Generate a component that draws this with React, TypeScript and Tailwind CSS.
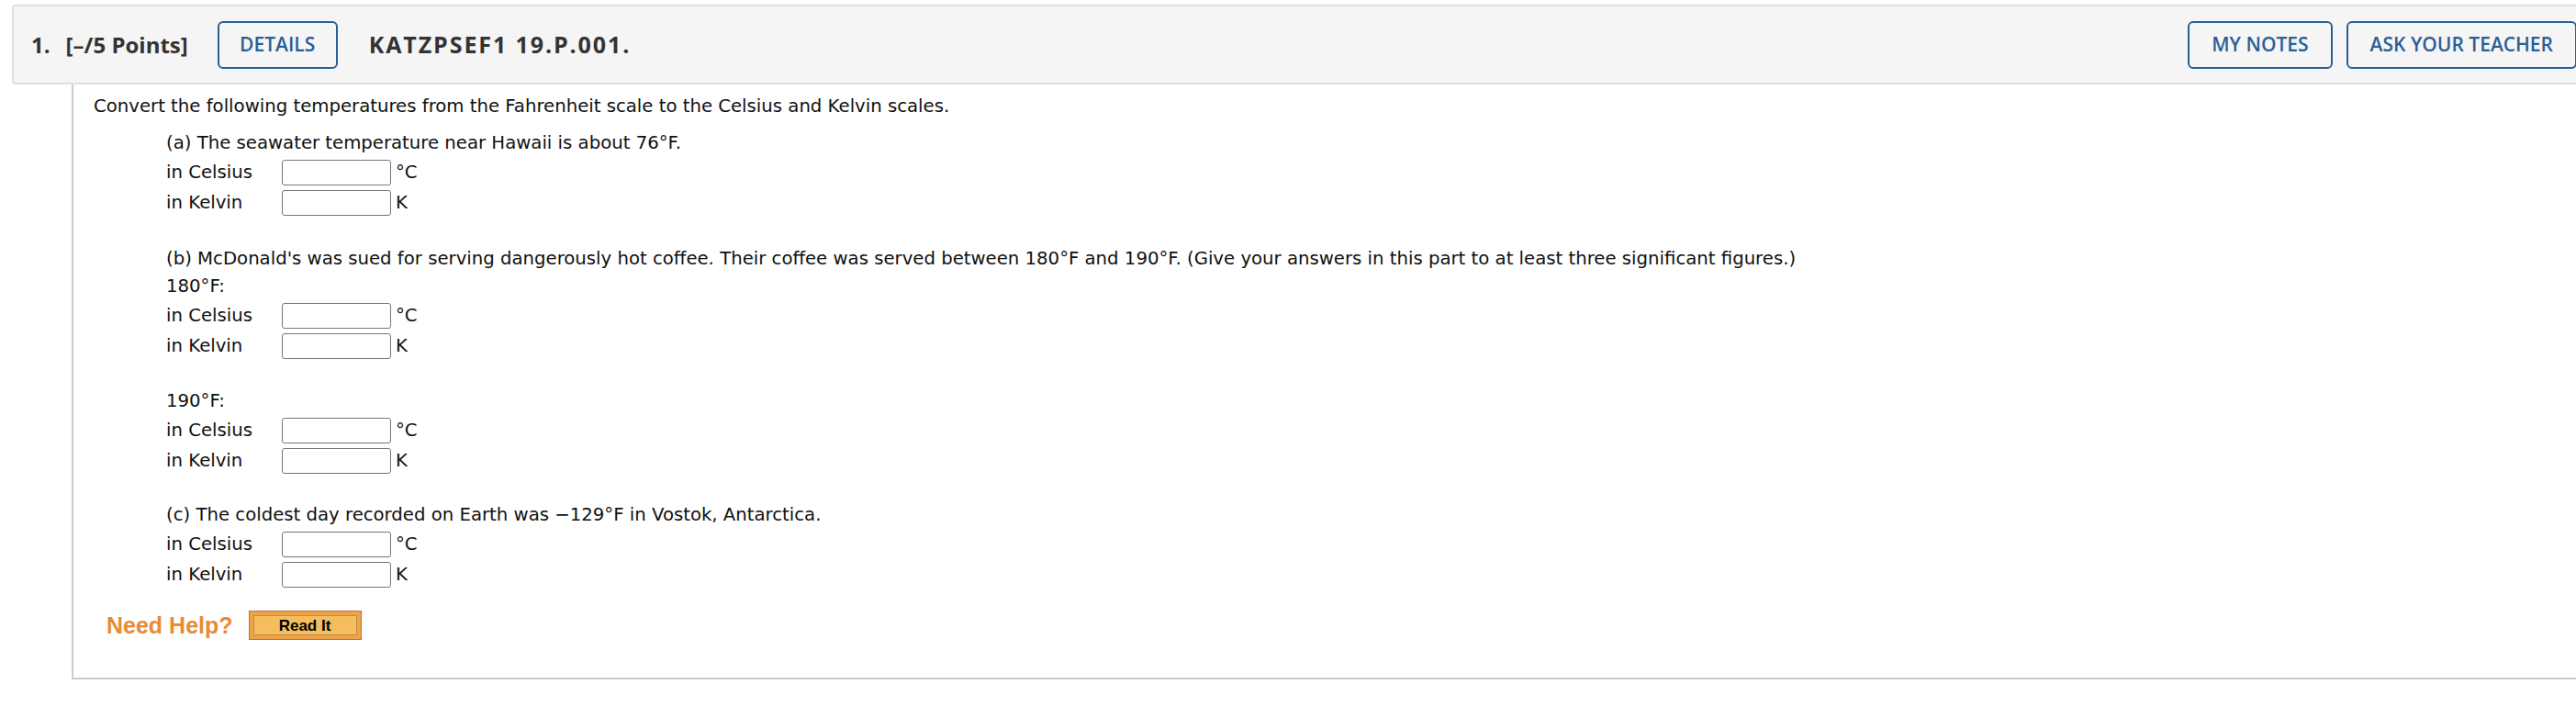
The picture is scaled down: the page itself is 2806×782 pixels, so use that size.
import React from "react"

function AnswerRow({ label, unit }: { label: string; unit: string }) {
  return (
    <div className="flex items-center h-[33px]">
      <span className="w-[126px]">{label}</span>
      <input
        type="text"
        className="w-[119px] h-[28px] border border-[#767676] rounded-[3px] bg-white outline-none"
      />
      <span className="ml-[5px]">{unit}</span>
    </div>
  )
}

function HeaderButton({ children }: { children: React.ReactNode }) {
  return (
    <button className="h-[52px] px-[24px] border-2 border-[#2a5f96] rounded-[6px] bg-transparent text-[#2a5f96] text-[21px] font-semibold leading-none">
      {children}
    </button>
  )
}

export default function App() {
  return (
    <div className="w-[2806px] min-h-[782px] overflow-hidden bg-white">
      <div className="pt-[5px] pl-[13px]">
        <div className="flex items-center h-[87px] bg-[#f5f5f5] border-2 border-r-0 border-[#dfdfdf] rounded-l-[4px] pl-[19px] pr-0 font-['Open_Sans',sans-serif] text-[#333333]">
          <span className="text-[24px] font-bold">1.</span>
          <span className="ml-[17px] text-[24px] font-bold">[–/5 Points]</span>
          <div className="ml-[32px]">
            <button className="w-[131px] h-[52px] border-2 border-[#2a5f96] rounded-[6px] text-[#2a5f96] text-[21px] font-semibold leading-none">
              DETAILS
            </button>
          </div>
          <span className="ml-[34px] text-[25px] font-bold tracking-[1.9px]">KATZPSEF1 19.P.001.</span>
          <div className="flex-1" />
          <div className="flex items-center gap-[15px] -mr-[1px]">
            <HeaderButton>MY NOTES</HeaderButton>
            <HeaderButton>ASK YOUR TEACHER</HeaderButton>
          </div>
        </div>
      </div>

      <div className="ml-[78px] border-l-2 border-b-2 border-[#cccccc] pl-[22px] pt-[9px] pb-[41px] font-['DejaVu_Sans',sans-serif] text-[19.7px] leading-[30px] text-[#111111]">
        <p>Convert the following temperatures from the Fahrenheit scale to the Celsius and Kelvin scales.</p>

        <div className="ml-[79px] mt-[10px]">
          <p>(a) The seawater temperature near Hawaii is about 76°F.</p>
          <AnswerRow label="in Celsius" unit="°C" />
          <AnswerRow label="in Kelvin" unit="K" />

          <p className="mt-[30px]">
            (b) McDonald's was sued for serving dangerously hot coffee. Their coffee was served between 180°F and
            190°F. (Give your answers in this part to at least three significant figures.)
          </p>
          <p>180°F:</p>
          <AnswerRow label="in Celsius" unit="°C" />
          <AnswerRow label="in Kelvin" unit="K" />

          <p className="mt-[29px]">190°F:</p>
          <AnswerRow label="in Celsius" unit="°C" />
          <AnswerRow label="in Kelvin" unit="K" />

          <p className="mt-[28px]">(c) The coldest day recorded on Earth was −129°F in Vostok, Antarctica.</p>
          <AnswerRow label="in Celsius" unit="°C" />
          <AnswerRow label="in Kelvin" unit="K" />
        </div>

        <div className="flex items-center mt-[23px] ml-[14px]">
          <span className="font-['Liberation_Sans',Arial,sans-serif] font-bold text-[25px] leading-none text-[#e88b34]">
            Need Help?
          </span>
          <button className="ml-[17px] w-[123px] h-[32px] border border-[#b5773a] bg-[#eea347] p-[4px]">
            <div className="w-full h-full border border-[#c48a45] bg-[#f4be5c] flex items-center justify-center font-['Liberation_Sans',Arial,sans-serif] font-bold text-[17px] leading-none text-black">
              Read It
            </div>
          </button>
        </div>
      </div>
    </div>
  )
}
